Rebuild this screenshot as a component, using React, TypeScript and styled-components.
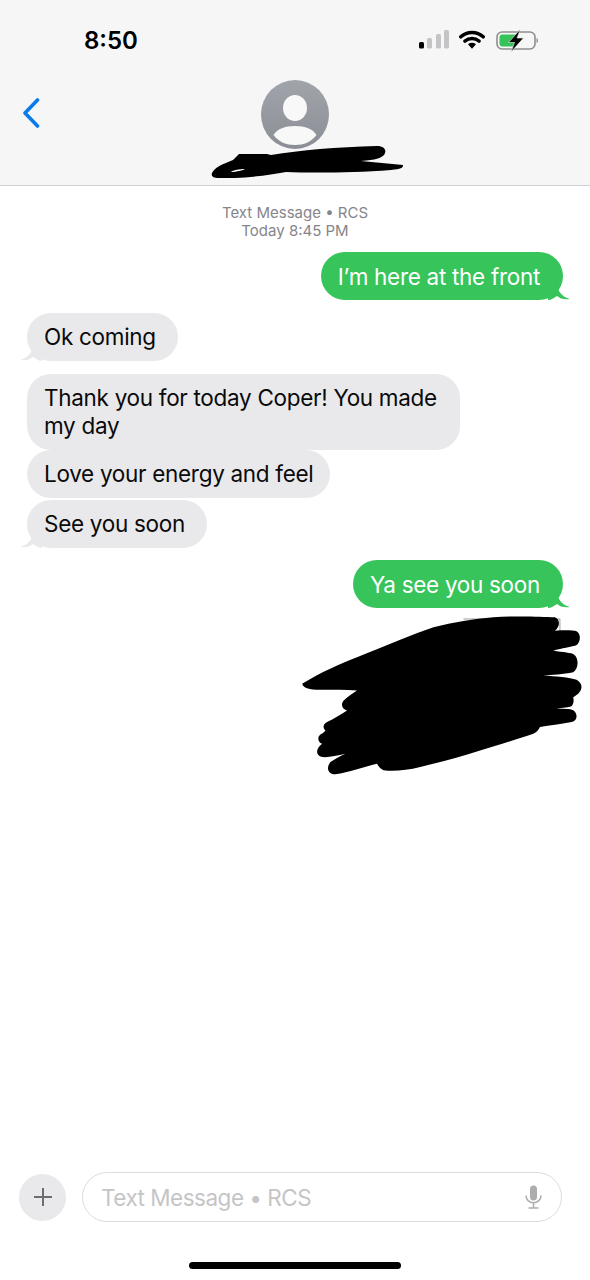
import React from 'react';
import styled, { createGlobalStyle } from 'styled-components';

const GlobalStyle = createGlobalStyle`
  html, body {
    margin: 0;
    padding: 0;
    background: #fff;
    font-family: Inter, "Liberation Sans", sans-serif;
  }
`;

const Screen = styled.div`
  width: 590px;
  height: 1280px;
  display: flex;
  flex-direction: column;
  overflow: hidden;
  background: #fff;
`;

const Header = styled.header`
  height: 185px;
  flex-shrink: 0;
  background: #f6f6f6;
  border-bottom: 1px solid #d2d2d4;
`;

const StatusBar = styled.div`
  height: 80px;
  display: flex;
  align-items: flex-start;
  justify-content: space-between;
  padding: 29px 50px 0 84px;
  box-sizing: border-box;
`;

const Clock = styled.div`
  font-size: 24px;
  line-height: 23px;
  font-weight: 600;
  color: #000;
`;

const StatusIcons = styled.div`
  display: flex;
  align-items: flex-start;
  gap: 10px;
`;

const NavRow = styled.div`
  position: relative;
  display: flex;
  flex-direction: column;
  align-items: center;
`;

const BackButton = styled.svg`
  position: absolute;
  left: 22px;
  top: 18px;
`;

const NameScribble = styled.svg`
  margin: -3px 0 0 24px;
  display: block;
`;

const Main = styled.main`
  flex: 1;
  display: flex;
  flex-direction: column;
  padding: 18px 27px 0;
`;

const Stamp = styled.div`
  text-align: center;
  font-size: 15px;
  line-height: 18px;
  font-weight: 400;
  color: #85858a;
  margin-bottom: 12px;
`;

const Bubble = styled.div<{ $sent?: boolean; $gap: number; $endPad?: number }>`
  position: relative;
  align-self: ${(p) => (p.$sent ? 'flex-end' : 'flex-start')};
  max-width: 433px;
  box-sizing: border-box;
  margin-top: ${(p) => p.$gap}px;
  padding: ${(p) => (p.$sent ? '11px 23px 9px 17px' : `10px ${p.$endPad ?? 22}px 10px 17px`)};
  border-radius: 24px;
  font-size: 22.5px;
  line-height: 28px;
  letter-spacing: -0.3px;
  background: ${(p) => (p.$sent ? '#36c45b' : '#e9e9eb')};
  color: ${(p) => (p.$sent ? '#fff' : '#0a0a0a')};
`;

const SentTail = styled.svg`
  position: absolute;
  right: -7px;
  bottom: 0;
`;

const ReceivedTail = styled.svg`
  position: absolute;
  left: -7px;
  bottom: 0;
`;

const Redaction = styled.svg`
  display: block;
  align-self: flex-end;
  margin: 6px -24px 0 0;
`;

const Composer = styled.div`
  display: flex;
  align-items: center;
  gap: 16px;
  padding: 0 28px 0 19px;
`;

const PlusButton = styled.div`
  width: 47px;
  height: 47px;
  border-radius: 50%;
  flex-shrink: 0;
  background: #e9e9eb;
  display: flex;
  align-items: center;
  justify-content: center;
`;

const InputPill = styled.div`
  flex: 1;
  height: 50px;
  box-sizing: border-box;
  border: 1.5px solid #dcdcde;
  border-radius: 25px;
  display: flex;
  align-items: center;
  justify-content: space-between;
  padding: 0 19px 0 18px;
`;

const Placeholder = styled.span`
  font-size: 22.5px;
  letter-spacing: -0.5px;
  color: #c5c5c7;
`;

const HomeRow = styled.div`
  height: 58px;
  display: flex;
  justify-content: center;
  padding-top: 40px;
  box-sizing: border-box;
`;

const HomeBar = styled.div`
  width: 212px;
  height: 7px;
  border-radius: 4px;
  background: #000;
`;

const Tail = ({ sent }: { sent?: boolean }) =>
  sent ? (
    <SentTail width="22" height="20" viewBox="0 0 22 20">
      <path d="M0 0 H8 C9 8 11 16 22 19 C16 20 12 18.5 9 16 C6 18 3 20 0 20 Z" fill="#36c45b" />
    </SentTail>
  ) : (
    <ReceivedTail width="22" height="20" viewBox="0 0 22 20">
      <path d="M22 0 H14 C13 8 11 16 0 19 C6 20 10 18.5 13 16 C16 18 19 20 22 20 Z" fill="#e9e9eb" />
    </ReceivedTail>
  );

const SignalIcon = () => (
  <svg width="30" height="19" viewBox="0 0 30 19" style={{ marginTop: 1 }}>
    <rect x="0" y="12" width="5" height="6.5" rx="1.5" fill="#000" />
    <rect x="8" y="8" width="5" height="10.5" rx="1.5" fill="#c4c4c6" />
    <rect x="17" y="4" width="5" height="14.5" rx="1.5" fill="#c4c4c6" />
    <rect x="25" y="0" width="5" height="18.5" rx="1.5" fill="#c4c4c6" />
  </svg>
);

const WifiIcon = () => (
  <svg width="26" height="19" viewBox="0 0 26 19" style={{ marginTop: 1 }}>
    <path
      d="M1.8 6.8 C8 1 18 1 24.2 6.8 M6 11 C10 7.6 16 7.6 20 11"
      fill="none"
      stroke="#000"
      strokeWidth="3.6"
      strokeLinecap="round"
    />
    <path d="M9 14.2 C11.5 12.4 14.5 12.4 17 14.2 L13 18.8 Z" fill="#000" />
  </svg>
);

const BatteryIcon = () => (
  <svg width="44" height="23" viewBox="0 0 44 23" style={{ marginLeft: 1 }}>
    <rect x="1" y="3" width="38" height="17" rx="5" fill="none" stroke="#8e8e90" strokeWidth="1.6" />
    <rect x="3.5" y="5.5" width="18" height="12" rx="3" fill="#35c359" />
    <path d="M40.5 9 C42.5 9.5 42.5 13.5 40.5 14 Z" fill="#8e8e90" />
    <path d="M24.5 0 L12.5 13.5 H18.5 L15 23 L27.5 9 H21 Z" fill="#000" stroke="#f6f6f6" strokeWidth="0.6" />
  </svg>
);

const AvatarIcon = () => (
  <svg width="68" height="69" viewBox="0 0 68 69" style={{ display: 'block' }}>
    <defs>
      <linearGradient id="avatarFill" x1="0" y1="0" x2="0" y2="1">
        <stop offset="0" stopColor="#a2a4ac" />
        <stop offset="1" stopColor="#8c8e96" />
      </linearGradient>
    </defs>
    <ellipse cx="34" cy="34.5" rx="34" ry="34.5" fill="url(#avatarFill)" />
    <ellipse cx="34" cy="28" rx="12" ry="13" fill="#f8f8f9" />
    <path d="M12.5 55 C16 49 24 46 34 46 C44 46 52 49 55.5 55 C50 62 43 65 34 65 C25 65 18 62 12.5 55 Z" fill="#f8f8f9" />
  </svg>
);

const MicIcon = () => (
  <svg width="17" height="24" viewBox="0 0 17 24">
    <rect x="5" y="0.5" width="7" height="15" rx="3.5" fill="#adadb0" />
    <path d="M1 10.5 C1 20 16 20 16 10.5 M8.5 18 V22.5 M3.5 23 H13.5" fill="none" stroke="#adadb0" strokeWidth="1.5" />
  </svg>
);

const App = () => (
  <Screen>
    <GlobalStyle />
    <Header>
      <StatusBar>
        <Clock>8:50</Clock>
        <StatusIcons>
          <SignalIcon />
          <WifiIcon />
          <BatteryIcon />
        </StatusIcons>
      </StatusBar>
      <NavRow>
        <BackButton width="20" height="30" viewBox="0 0 20 30">
          <path d="M15.5 2 L3 15 L15.5 28" fill="none" stroke="#0a7aed" strokeWidth="3.6" strokeLinecap="round" strokeLinejoin="round" />
        </BackButton>
        <AvatarIcon />
        <NameScribble width="192" height="32" viewBox="0 0 192 32">
          <path
            d="M1 27 C4 21 12 18 22 14 L28 8 H56 L60 9 C90 4 125 1 166 0 C174 0 176 5 173 9 C170 12 165 14 150 15 L192 19 C192 22 190 23 180 24 C140 27 100 27 75 26 C55 30 25 33 8 32 C2 32 0 30 1 27 Z M20 26 C26 26 32 24 34 23 C28 23 22 24 20 26 Z"
            fill="#000"
            fillRule="evenodd"
          />
        </NameScribble>
      </NavRow>
    </Header>
    <Main>
      <Stamp>
        Text Message • RCS
        <br />
        Today 8:45 PM
      </Stamp>
      <Bubble $sent $gap={0}>
        I’m here at the front
        <Tail sent />
      </Bubble>
      <Bubble $gap={13}>
        Ok coming
        <Tail />
      </Bubble>
      <Bubble $gap={13}>Thank you for today Coper! You made my day</Bubble>
      <Bubble $gap={0} $endPad={16}>
        Love your energy and feel
      </Bubble>
      <Bubble $gap={2}>
        See you soon
        <Tail />
      </Bubble>
      <Bubble $sent $gap={12}>
        Ya see you soon
        <Tail sent />
      </Bubble>
      <Redaction width="287" height="163" viewBox="60 190 860 490">
        <path d="M550 205 H840 V238" fill="none" stroke="#9a9a9a" strokeWidth="3" />
        <path
          d="M65 400 C120 365 180 340 230 320 C320 285 400 250 460 230 C520 215 580 205 640 200 C710 195 780 198 825 200 C840 205 842 228 825 240 C850 238 880 238 890 242 C905 250 902 278 888 285 C860 292 835 296 820 300 C850 306 875 306 882 312 C897 322 897 355 880 365 C850 372 815 372 790 375 C825 378 870 380 890 388 C912 400 910 425 880 440 C882 450 882 460 875 467 C860 472 840 472 830 475 C850 475 870 475 880 479 C895 490 893 510 875 515 C840 522 810 525 780 530 C775 540 770 545 760 550 C700 570 650 585 600 600 C540 620 480 635 420 650 C380 660 340 664 310 660 C300 655 295 648 290 640 C250 650 205 665 165 672 C145 672 135 655 150 635 C160 628 178 618 195 610 C170 615 145 622 125 620 C105 615 105 595 125 580 C112 575 110 560 120 552 C128 548 134 542 135 540 C125 530 130 520 140 515 C160 505 182 492 200 480 C185 475 180 462 190 450 C200 440 215 430 230 420 C195 418 160 418 130 418 C100 418 70 418 65 400 Z"
          fill="#000"
        />
      </Redaction>
    </Main>
    <Composer>
      <PlusButton>
        <svg width="18" height="18" viewBox="0 0 18 18">
          <path d="M9 0 V18 M0 9 H18" stroke="#6d6d71" strokeWidth="2" />
        </svg>
      </PlusButton>
      <InputPill>
        <Placeholder>Text Message • RCS</Placeholder>
        <MicIcon />
      </InputPill>
    </Composer>
    <HomeRow>
      <HomeBar />
    </HomeRow>
  </Screen>
);

export default App;
